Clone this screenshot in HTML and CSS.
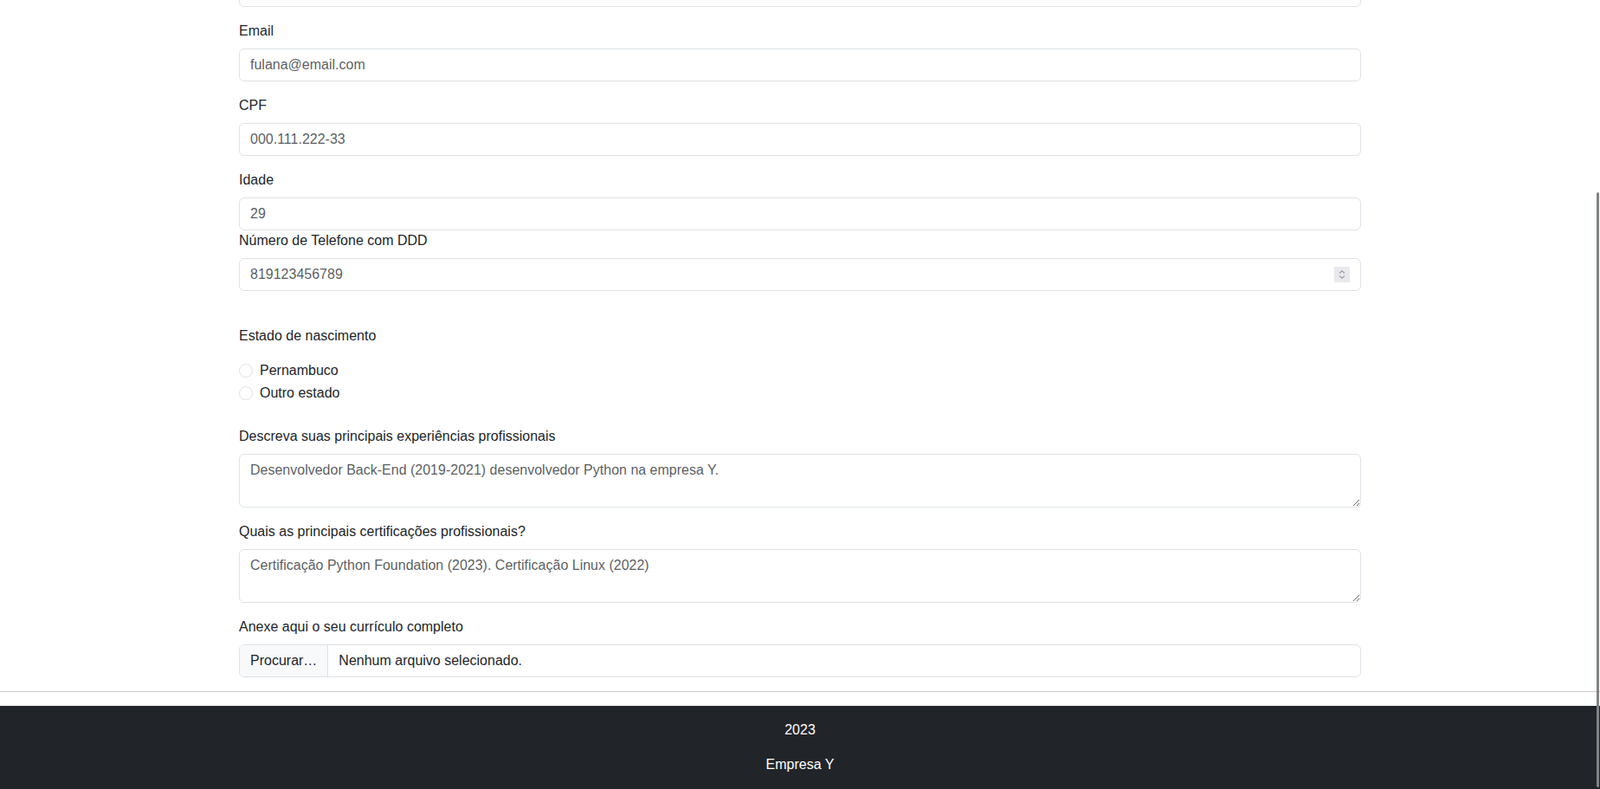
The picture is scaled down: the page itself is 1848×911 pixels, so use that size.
FILE: index.html
```html
<!DOCTYPE html>
<html lang="pt-BR">
<head>
<meta charset="utf-8">
<title>Formulário</title>
<link rel="stylesheet" href="styles.css">
</head>
<body>
<main class="container">
  <form class="form">
    <div class="group">
      <input class="control" type="text" placeholder="Fulana de Tal">
    </div>
    <div class="group">
      <label class="label">Email</label>
      <input class="control" type="email" placeholder="fulana@email.com">
    </div>
    <div class="group">
      <label class="label">CPF</label>
      <input class="control" type="text" placeholder="000.111.222-33">
    </div>
    <div class="group group-tight">
      <label class="label">Idade</label>
      <input class="control" type="text" placeholder="29">
    </div>
    <div class="group">
      <label class="label">Número de Telefone com DDD</label>
      <div class="number-wrap">
        <input class="control" type="text" placeholder="819123456789">
        <span class="spinner">
          <svg width="18" height="18" viewBox="0 0 18 18"><path d="M6 7.5 L9 4.8 L12 7.5" fill="none" stroke="#9a9aa6" stroke-width="1.1"/><path d="M6 10.5 L9 13.2 L12 10.5" fill="none" stroke="#9a9aa6" stroke-width="1.1"/></svg>
        </span>
      </div>
    </div>
    <div class="radio-group">
      <p class="label radio-title">Estado de nascimento</p>
      <div class="check">
        <input class="radio" type="radio" name="estado" id="pe">
        <label for="pe">Pernambuco</label>
      </div>
      <div class="check">
        <input class="radio" type="radio" name="estado" id="outro">
        <label for="outro">Outro estado</label>
      </div>
    </div>
    <div class="group">
      <label class="label">Descreva suas principais experiências profissionais</label>
      <textarea class="control area" rows="2" placeholder="Desenvolvedor Back-End (2019-2021) desenvolvedor Python na empresa Y."></textarea>
    </div>
    <div class="group">
      <label class="label">Quais as principais certificações profissionais?</label>
      <textarea class="control area" rows="2" placeholder="Certificação Python Foundation (2023). Certificação Linux (2022)"></textarea>
    </div>
    <div class="group">
      <label class="label">Anexe aqui o seu currículo completo</label>
      <div class="file">
        <span class="file-btn">Procurar…</span>
        <span class="file-name">Nenhum arquivo selecionado.</span>
      </div>
    </div>
  </form>
</main>
<hr class="rule">
<footer class="footer">
  <p>2023</p>
  <p>Empresa Y</p>
</footer>
<div class="scroll-thumb"></div>
</body>
</html>
```
FILE: styles.css
```css
html {
  overflow: hidden;
}
* {
  box-sizing: border-box;
}
body {
  margin: 0;
  font-family: "Liberation Sans", Arial, sans-serif;
  font-size: 16px;
  line-height: 1.5;
  color: #212529;
  background: #fff;
}
.container {
  max-width: 1320px;
  margin: 0 auto;
  padding: 0 12px;
}
.form {
  margin-top: -30px;
}
.group {
  margin-bottom: 16px;
}
.group-tight {
  margin-bottom: 0;
}
.label {
  display: block;
  margin: 0 0 8px;
}
.control {
  display: block;
  width: 100%;
  height: 38px;
  padding: 6px 12px;
  font: inherit;
  line-height: 24px;
  color: #212529;
  background: #fff;
  border: 1px solid #dee2e6;
  border-radius: 6px;
  outline: none;
}
.control::placeholder {
  color: rgba(33, 37, 41, 0.75);
  opacity: 1;
}
.area {
  height: 62px;
  resize: vertical;
}
.number-wrap {
  position: relative;
}
.spinner {
  position: absolute;
  right: 13px;
  top: 10px;
  width: 18px;
  height: 18px;
  background: #e9e9ed;
  display: flex;
}
.radio-group {
  margin: 40px 0 26px;
}
.radio-title {
  margin-bottom: 16px;
}
.check {
  display: flex;
  align-items: flex-start;
  gap: 8px;
  min-height: 24px;
  margin-bottom: 2px;
}
.radio {
  appearance: none;
  -webkit-appearance: none;
  width: 16px;
  height: 16px;
  margin: 4px 0 0;
  border: 1px solid #dee2e6;
  border-radius: 50%;
  background: #fff;
  flex: none;
}
.file {
  display: flex;
  height: 38px;
  border: 1px solid #dee2e6;
  border-radius: 6px;
  overflow: hidden;
}
.file-btn {
  padding: 6px 12px;
  background: #f8f9fa;
  border-right: 1px solid #dee2e6;
  white-space: nowrap;
}
.file-name {
  padding: 6px 12px;
  white-space: nowrap;
}
.rule {
  margin: 16px 0;
  border: 0;
  border-top: 1px solid #c9cacb;
}
.footer {
  background: #212529;
  color: #fff;
  text-align: center;
  padding: 16px 0;
}
.footer p {
  margin: 0 0 16px;
}
.footer p:last-child {
  margin-bottom: 0;
}
.scroll-thumb {
  position: fixed;
  right: 1px;
  top: 222px;
  bottom: 2px;
  width: 3px;
  border-radius: 2px;
  background: #7f8383;
}
```
